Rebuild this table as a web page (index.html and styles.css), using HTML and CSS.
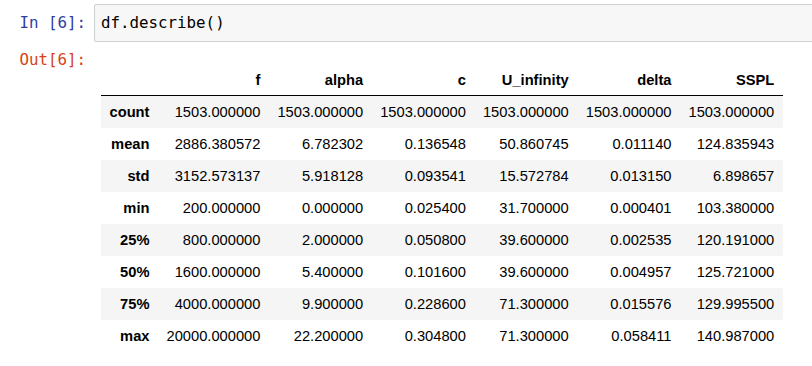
FILE: index.html
```html
<!DOCTYPE html>
<html lang="en">
<head>
    <meta charset="UTF-8">
    <meta name="viewport" content="width=device-width, initial-scale=1.0">
    <title>df.describe()</title>
    <link rel="stylesheet" href="styles.css">
</head>
<body>
    <div class="notebook">
        <div class="input-row">
            <div class="prompt in-prompt">In&nbsp;[6]:</div>
            <div class="input-area">df.describe()</div>
        </div>

        <div class="output-row">
            <div class="prompt out-prompt">Out[6]:</div>
            <div class="output-area">
                <table class="dataframe">
                    <thead>
                        <tr>
                            <th></th>
                            <th>f</th>
                            <th>alpha</th>
                            <th>c</th>
                            <th>U_infinity</th>
                            <th>delta</th>
                            <th>SSPL</th>
                        </tr>
                    </thead>
                    <tbody>
                        <tr><th>count</th><td>1503.000000</td><td>1503.000000</td><td>1503.000000</td><td>1503.000000</td><td>1503.000000</td><td>1503.000000</td></tr>
                        <tr><th>mean</th><td>2886.380572</td><td>6.782302</td><td>0.136548</td><td>50.860745</td><td>0.011140</td><td>124.835943</td></tr>
                        <tr><th>std</th><td>3152.573137</td><td>5.918128</td><td>0.093541</td><td>15.572784</td><td>0.013150</td><td>6.898657</td></tr>
                        <tr><th>min</th><td>200.000000</td><td>0.000000</td><td>0.025400</td><td>31.700000</td><td>0.000401</td><td>103.380000</td></tr>
                        <tr><th>25%</th><td>800.000000</td><td>2.000000</td><td>0.050800</td><td>39.600000</td><td>0.002535</td><td>120.191000</td></tr>
                        <tr><th>50%</th><td>1600.000000</td><td>5.400000</td><td>0.101600</td><td>39.600000</td><td>0.004957</td><td>125.721000</td></tr>
                        <tr><th>75%</th><td>4000.000000</td><td>9.900000</td><td>0.228600</td><td>71.300000</td><td>0.015576</td><td>129.995500</td></tr>
                        <tr><th>max</th><td>20000.000000</td><td>22.200000</td><td>0.304800</td><td>71.300000</td><td>0.058411</td><td>140.987000</td></tr>
                    </tbody>
                </table>
            </div>
        </div>
    </div>
</body>
</html>
```

FILE: styles.css
```css
body {
    margin: 0;
    background-color: #fff;
    color: #000;
    font-family: 'Liberation Sans', Arial, sans-serif;
    overflow: hidden;
}
.notebook {
    padding-top: 4px;
}
.input-row,
.output-row {
    display: flex;
    align-items: flex-start;
}
.prompt {
    width: 94px;
    flex: none;
    box-sizing: border-box;
    padding-right: 8px;
    text-align: right;
    font-family: 'DejaVu Sans Mono', 'Liberation Mono', monospace;
    font-size: 15.8px;
}
.in-prompt {
    color: #303F9F;
    line-height: 38px;
}
.out-prompt {
    color: #D84315;
    padding-top: 4px;
    line-height: 20px;
}
.input-area {
    flex: 1;
    height: 38px;
    box-sizing: border-box;
    margin-right: -20px;
    padding-left: 6px;
    border: 1px solid #cfcfcf;
    border-radius: 2px;
    background-color: #f7f7f7;
    font-family: 'DejaVu Sans Mono', 'Liberation Mono', monospace;
    font-size: 15.8px;
    line-height: 36px;
}
.output-row {
    margin-top: 4px;
}
.output-area {
    padding-left: 7px;
    padding-top: 18px;
}
.dataframe {
    border-collapse: collapse;
    border: none;
    font-size: 14.7px;
}
.dataframe th,
.dataframe td {
    text-align: right;
    white-space: nowrap;
    padding: 8px 8.5px;
    line-height: 16px;
}
.dataframe thead th {
    font-weight: bold;
    padding-bottom: 7px;
    border-bottom: 1px solid #000;
}
.dataframe tbody th {
    font-weight: bold;
}
.dataframe tbody tr:nth-child(odd) {
    background-color: #f5f5f5;
}
```
